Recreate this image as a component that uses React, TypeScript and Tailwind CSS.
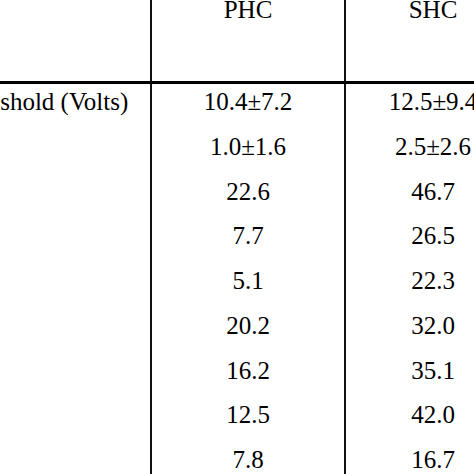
const rows: [string, string, string][] = [
  ['Threshold (Volts)', '10.4±7.2', '12.5±9.4'],
  ['', '1.0±1.6', '2.5±2.6'],
  ['', '22.6', '46.7'],
  ['', '7.7', '26.5'],
  ['', '5.1', '22.3'],
  ['', '20.2', '32.0'],
  ['', '16.2', '35.1'],
  ['', '12.5', '42.0'],
  ['', '7.8', '16.7'],
];

export default function App() {
  return (
    <div
      className="w-[474px] h-[474px] overflow-hidden bg-white text-black text-[25px]"
      style={{ fontFamily: '"Liberation Serif", "Times New Roman", serif' }}
    >
      <div className="-ml-[60px] w-[600px]">
        {/* Header */}
        <div className="grid grid-cols-[210px_194px_196px] h-[84px] border-b-[3px] border-black leading-[20px]">
          <div className="pl-[13px]"></div>
          <div className="border-l-2 border-[#111] text-center">PHC</div>
          <div className="border-l-2 border-[#111] text-center pr-[20px]">SHC</div>
        </div>

        {/* Body */}
        {rows.map((r, i) => (
          <div
            key={i}
            className="grid grid-cols-[210px_194px_196px] h-[44.75px] leading-[35px]"
          >
            <div className="pl-[13px] whitespace-nowrap">{r[0]}</div>
            <div className="border-l-2 border-[#111] text-center">{r[1]}</div>
            <div className="border-l-2 border-[#111] text-center pr-[20px] whitespace-nowrap">{r[2]}</div>
          </div>
        ))}
      </div>
    </div>
  );
}
